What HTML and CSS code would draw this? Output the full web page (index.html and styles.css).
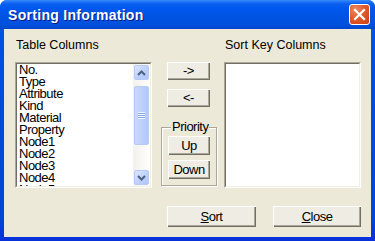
FILE: index.html
```html
<!DOCTYPE html>
<html lang="en">
<head>
    <meta charset="UTF-8">
    <title>Sorting Information</title>
    <link rel="stylesheet" href="styles.css">
</head>
<body>
    <div class="window">
        <div class="titlebar">
            <span class="title">Sorting Information</span>
            <button class="close-x" aria-label="Close">
                <svg width="13" height="13" viewBox="0 0 13 13">
                    <path d="M2 2 L11 11 M11 2 L2 11" stroke="#fff" stroke-width="2.2" stroke-linecap="square" fill="none"/>
                </svg>
            </button>
        </div>
        <div class="client">
            <div class="main">
                <div class="col">
                    <div class="label">Table Columns</div>
                    <div class="listbox">
                        <div class="listbox-inner">
                            <ul class="items">
                                <li>No.</li>
                                <li>Type</li>
                                <li>Attribute</li>
                                <li>Kind</li>
                                <li>Material</li>
                                <li>Property</li>
                                <li>Node1</li>
                                <li>Node2</li>
                                <li>Node3</li>
                                <li>Node4</li>
                                <li>Node5</li>
                            </ul>
                            <div class="scrollbar">
                                <div class="sb-btn">
                                    <svg width="9" height="6" viewBox="0 0 9 6"><path d="M1 5 L4.5 1.5 L8 5" stroke="#4D6185" stroke-width="2" fill="none"/></svg>
                                </div>
                                <div class="sb-track">
                                    <div class="sb-thumb">
                                        <span class="grip"></span>
                                    </div>
                                </div>
                                <div class="sb-btn">
                                    <svg width="9" height="6" viewBox="0 0 9 6"><path d="M1 1 L4.5 4.5 L8 1" stroke="#4D6185" stroke-width="2" fill="none"/></svg>
                                </div>
                            </div>
                        </div>
                    </div>
                </div>

                <div class="mid">
                    <button class="btn arrow">-&gt;</button>
                    <button class="btn arrow">&lt;-</button>
                    <fieldset class="group">
                        <legend>Priority</legend>
                        <button class="btn small">Up</button>
                        <button class="btn small">Down</button>
                    </fieldset>
                </div>

                <div class="col">
                    <div class="label">Sort Key Columns</div>
                    <div class="listbox">
                        <div class="listbox-inner"></div>
                    </div>
                </div>
            </div>

            <div class="actions">
                <button class="btn wide"><u>S</u>ort</button>
                <button class="btn wide"><u>C</u>lose</button>
            </div>
        </div>
    </div>
</body>
</html>
```

FILE: styles.css
```css
* {
    box-sizing: border-box;
}
body {
    margin: 0;
    background: #fff;
    font-family: "Liberation Sans", Arial, sans-serif;
}
.window {
    width: 375px;
    height: 241px;
    display: flex;
    flex-direction: column;
    background: linear-gradient(#0054E3, #0046D5 90%, #0831D9);
    border-radius: 7px 7px 0 0;
    overflow: hidden;
}
.titlebar {
    height: 29px;
    display: flex;
    align-items: center;
    justify-content: space-between;
    padding: 0 5px 0 8px;
    background: linear-gradient(#3A8CF8 0, #1E72F6 2px, #0A5EF0 4px, #0058EE 8px, #0054E3 55%, #0050DD 85%, #0046CC 100%);
}
.title {
    color: #fff;
    font-weight: bold;
    font-size: 14px;
    letter-spacing: 0.3px;
    text-shadow: 1px 1px 0 #0A1883;
    padding-top: 1px;
}
.close-x {
    width: 21px;
    height: 21px;
    padding: 0;
    border: 1px solid #fff;
    border-radius: 3px;
    background: radial-gradient(circle at 30% 25%, #EC8A64 0, #E25A2C 45%, #CB3E14 100%);
    display: flex;
    align-items: center;
    justify-content: center;
}
.client {
    flex: 1;
    margin: 0 4px 4px 4px;
    background: #ECE9D8;
    padding: 9px 10px 0 11px;
    display: flex;
    flex-direction: column;
    font-size: 13px;
    letter-spacing: -0.5px;
    color: #000;
}
.main {
    display: flex;
}
.col {
    width: 137px;
}
.label {
    height: 24px;
    font-size: 12.5px;
    letter-spacing: 0;
    line-height: 14px;
    padding-left: 1px;
}
.listbox {
    height: 126px;
    border: 1px solid;
    border-color: #ACA899 #fff #fff #ACA899;
}
.listbox-inner {
    height: 100%;
    display: flex;
    background: #fff;
    border: 1px solid;
    border-color: #716F64 #F1EFE2 #F1EFE2 #716F64;
}
.items {
    flex: 1;
    list-style: none;
    margin: 0;
    padding: 0 0 0 2px;
    line-height: 12px;
    overflow: hidden;
}
.scrollbar {
    width: 17px;
    display: flex;
    flex-direction: column;
    background: linear-gradient(to right, #F3F1EC, #FEFEFB);
}
.sb-btn {
    height: 15px;
    margin: 1px;
    border: 1px solid #B6CAF6;
    border-radius: 2px;
    background: linear-gradient(135deg, #DCE6FE, #BCCFFB 60%, #B0C6F8);
    display: flex;
    align-items: center;
    justify-content: center;
}
.sb-track {
    flex: 1;
}
.sb-thumb {
    height: 59px;
    margin: 5px 1px 0 1px;
    border: 1px solid #B6CAF6;
    border-radius: 2px;
    background: linear-gradient(to right, #C9D8FD, #BCCFFB 60%, #B3C8F9);
    display: flex;
    align-items: center;
    justify-content: center;
}
.grip {
    width: 7px;
    height: 7px;
    background: repeating-linear-gradient(#EEF4FE 0, #EEF4FE 1px, #8CA9E8 1px, #8CA9E8 2px);
}
.mid {
    width: 56px;
    margin: 24px 7px 0 9px;
    display: flex;
    flex-direction: column;
}
.btn {
    font-family: "Liberation Sans", Arial, sans-serif;
    font-size: 13px;
    letter-spacing: -0.5px;
    color: #000;
    padding: 0;
    border: none;
    background: #EEECE3;
    box-shadow: inset 1px 1px 0 #fff, inset -1px -1px 0 #716F64, inset -2px -2px 0 #ACA899;
    line-height: 14px;
}
.btn u {
    text-decoration-thickness: 1px;
    text-underline-offset: 1px;
}
.arrow {
    width: 43px;
    height: 18px;
    margin-left: 6px;
    margin-bottom: 9px;
}
.group {
    margin: 4px 0 0 0;
    padding: 0 0 6px 6px;
    min-inline-size: 0;
    border: 1px solid #ACA899;
    box-shadow: inset 1px 1px 0 #fff, 1px 1px 0 #fff;
    display: flex;
    flex-direction: column;
}
.group legend {
    margin-left: 3px;
    padding: 0 1px;
    line-height: 14px;
    font-size: 13px;
    letter-spacing: -0.5px;
    background: #ECE9D8;
}
.small {
    width: 42px;
    height: 19px;
    margin-top: 2px;
}
.small + .small {
    margin-top: 5px;
}
.actions {
    display: flex;
    margin-top: 18px;
    padding-left: 152px;
    gap: 17px;
}
.wide {
    width: 89px;
    height: 21px;
}
.wide + .wide {
    width: 88px;
}
```
